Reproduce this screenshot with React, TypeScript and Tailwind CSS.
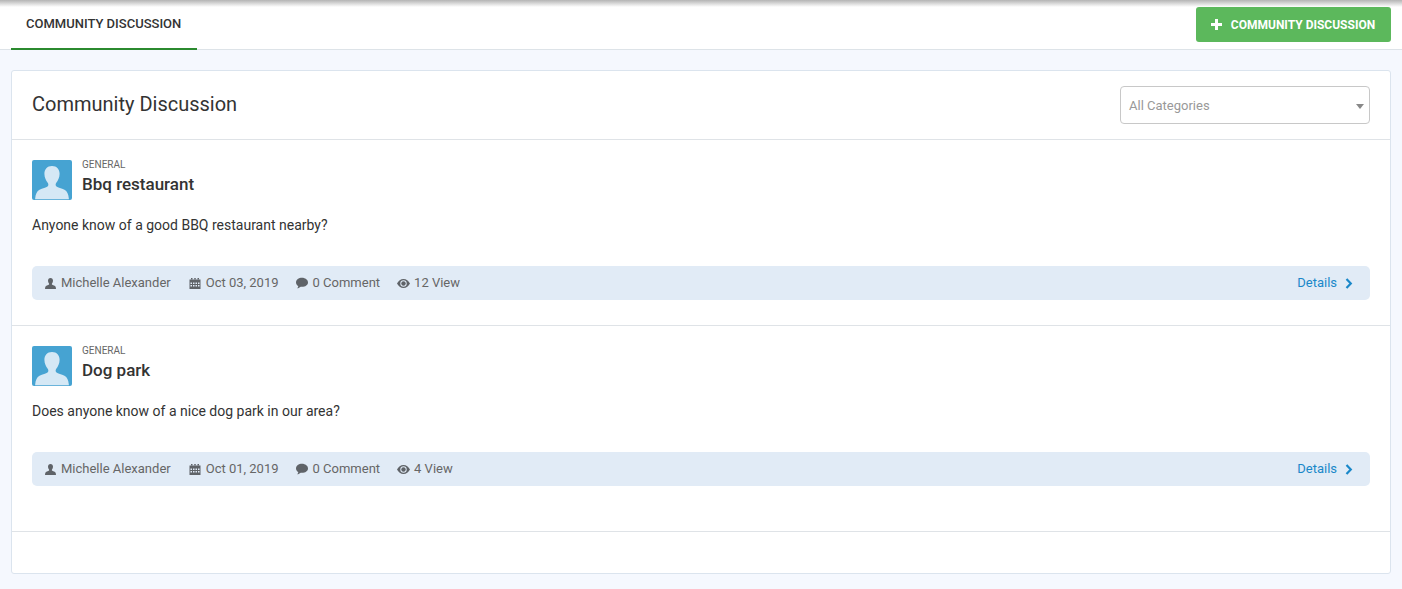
import React from "react";

function Avatar() {
  return (
    <svg width="40" height="40" viewBox="0 0 40 40" className="shrink-0">
      <rect width="40" height="40" rx="2" fill="#46a3d2" />
      <path d="M20 6c-4.900 0-7.600 3.500-7.600 7.800 0 3.600 1.600 7 3.300 9 .9 1.100.9 2.900-.2 3.700-1.300.9-5 1.800-8 3.300C4.900 31.200 3.600 34 3.200 38.200l-.1 1h33.800l-.1-1c-.4-4.200-1.700-7-4.300-8.400-3-1.500-6.700-2.400-8-3.300-1.100-.8-1.100-2.600-.2-3.700 1.700-2 3.300-5.400 3.300-9C27.600 9.500 24.900 6 20 6z" fill="#d5e8f5" />
    </svg>
  );
}

const UserIcon = () => (
  <svg width="11" height="11" viewBox="0 0 11 11" fill="currentColor">
    <path d="M5.500 0C3.900 0 3 1.200 3 2.800c0 1.100.4 2.100 1 2.800.3.400.2.900-.2 1.100-1 .5-2.400.7-3.100 1.500C.2 8.800 0 9.700 0 11h11c0-1.300-.2-2.200-.7-2.800-.7-.8-2.100-1-3.100-1.500-.4-.2-.5-.7-.2-1.100.6-.7 1-1.700 1-2.800C8 1.200 7.100 0 5.500 0z" />
  </svg>
);

const CalendarIcon = () => (
  <svg width="12" height="11" viewBox="0 0 12 11" fill="currentColor">
    <path d="M2 0h1.500v1.500H2zM5.250 0h1.500v1.500h-1.500zM8.500 0H10v1.500H8.500z" />
    <path fillRule="evenodd" d="M.5 1.500h11V11H.5zM1.500 4.500v1.500h1.500V4.500zm2.500 0v1.500h1.500V4.500zm2.500 0v1.500H8V4.500zm2.500 0v1.500h1.500V4.500zM1.500 7v1.500h1.500V7zm2.500 0v1.500h1.500V7zm2.500 0v1.500H8V7zM9 7v1.500h1.500V7z" />
  </svg>
);

const CommentIcon = () => (
  <svg width="12" height="12" viewBox="0 0 12 12" fill="currentColor">
    <path d="M6 .8C2.700.8 0 2.900 0 5.400c0 1.500.9 2.800 2.300 3.600-.1.900-.5 1.600-1.100 2.300 1.300-.1 2.500-.7 3.500-1.600.4.100.9.100 1.300.100 3.300 0 6-2 6-4.400S9.300.8 6 .8z" />
  </svg>
);

const EyeIcon = () => (
  <svg width="13" height="9" viewBox="0 0 13 9" fill="currentColor">
    <path fillRule="evenodd" d="M6.500 0C3.700 0 1.400 1.800 0 4.500 1.400 7.200 3.700 9 6.500 9s5.100-1.800 6.500-4.500C11.600 1.800 9.300 0 6.500 0zm0 1.300a3.200 3.200 0 1 1 0 6.400 3.200 3.200 0 0 1 0-6.400z" />
    <circle cx="6.500" cy="4.500" r="2.200" />
  </svg>
);

const ChevronIcon = () => (
  <svg width="8" height="11" viewBox="0 0 8 11" fill="none" stroke="currentColor" strokeWidth="2.200">
    <path d="M1.500 1l4.300 4.500L1.500 10" />
  </svg>
);

const PlusIcon = () => (
  <svg width="11" height="11" viewBox="0 0 11 11" fill="currentColor">
    <path d="M4 0h3v4h4v3H7v4H4V7H0V4h4z" />
  </svg>
);

function Post({ title, body, date, views, tall }: { title: string; body: string; date: string; views: string; tall?: boolean }) {
  return (
    <div className={tall ? "h-[206px] border-b border-[#dfe3e7] px-5 pt-5" : "h-[186px] border-b border-[#dfe3e7] px-5 pt-5"}>
      <div className="flex h-[40px] gap-[10px]">
        <Avatar />
        <div>
          <div className="text-[10px] leading-[10px] uppercase text-[#666]">General</div>
          <div className="mt-[2px] text-[17px] font-medium leading-[24px] text-[#333]">{title}</div>
        </div>
      </div>
      <p className="mt-[15px] text-[14px] leading-[20px] text-[#333]">{body}</p>
      <div className="mt-[31px] flex h-[34px] items-center justify-between rounded-[5px] bg-[#e1ebf6] pl-[13px] pr-[17px] text-[13px] text-[#666]">
        <div className="flex items-center gap-[17px]">
          <span className="flex items-center gap-[5px]">
            <span className="text-[#5f6368]"><UserIcon /></span>
            <span>Michelle Alexander</span>
          </span>
          <span className="ml-[1px] flex items-center gap-[5px]">
            <span className="text-[#5f6368]"><CalendarIcon /></span>
            <span>{date}</span>
          </span>
          <span className="flex items-center gap-[5px]">
            <span className="text-[#5f6368]"><CommentIcon /></span>
            <span>0 Comment</span>
          </span>
          <span className="flex items-center gap-[4px]">
            <span className="text-[#5f6368]"><EyeIcon /></span>
            <span>{views}</span>
          </span>
        </div>
        <div className="flex items-center gap-[8px] text-[#1a88c9]">
          <span>Details</span>
          <ChevronIcon />
        </div>
      </div>
    </div>
  );
}

export default function App() {
  return (
    <div className="relative h-[589px] overflow-hidden bg-[#f5f8fe] font-['Roboto',sans-serif]">
      <header className="flex h-[50px] items-start justify-between border-b border-[#dde3e8] bg-white px-[11px]">
        <div className="flex h-[50px] w-[186px] items-center border-b-2 border-[#2b8a2f] pl-[15px] text-[13px] font-medium text-[#333]">
          COMMUNITY DISCUSSION
        </div>
        <button className="mt-[7px] flex h-[35px] w-[195px] items-center justify-center gap-[9px] rounded-[3px] bg-[#5cb85c] pr-[1px] text-[12px] font-bold text-white">
          <PlusIcon />
          <span>COMMUNITY DISCUSSION</span>
        </button>
      </header>
      <div className="absolute inset-x-0 top-0 h-[7px] bg-gradient-to-b from-[#b4b4b4] to-transparent" />
      <main className="mx-[11px] mt-[20px] h-[504px] rounded-[3px] border border-[#dbe4ee] bg-white">
        <div className="flex h-[69px] items-center justify-between border-b border-[#dfe3e7] px-5">
          <h1 className="mb-[2px] text-[20px] font-normal text-[#333]">Community Discussion</h1>
          <div className="relative flex h-[38px] w-[250px] items-center rounded-[4px] border border-[#c8c8c8] pl-2 pt-[1px] text-[13px] text-[#999]">
            All Categories
            <span className="absolute right-[5px] top-[17px] h-0 w-0 border-x-[4px] border-t-[5px] border-x-transparent border-t-[#888]" />
          </div>
        </div>
        <Post title="Bbq restaurant" body="Anyone know of a good BBQ restaurant nearby?" date="Oct 03, 2019" views="12 View" />
        <Post tall title="Dog park" body="Does anyone know of a nice dog park in our area?" date="Oct 01, 2019" views="4 View" />
      </main>
    </div>
  );
}
